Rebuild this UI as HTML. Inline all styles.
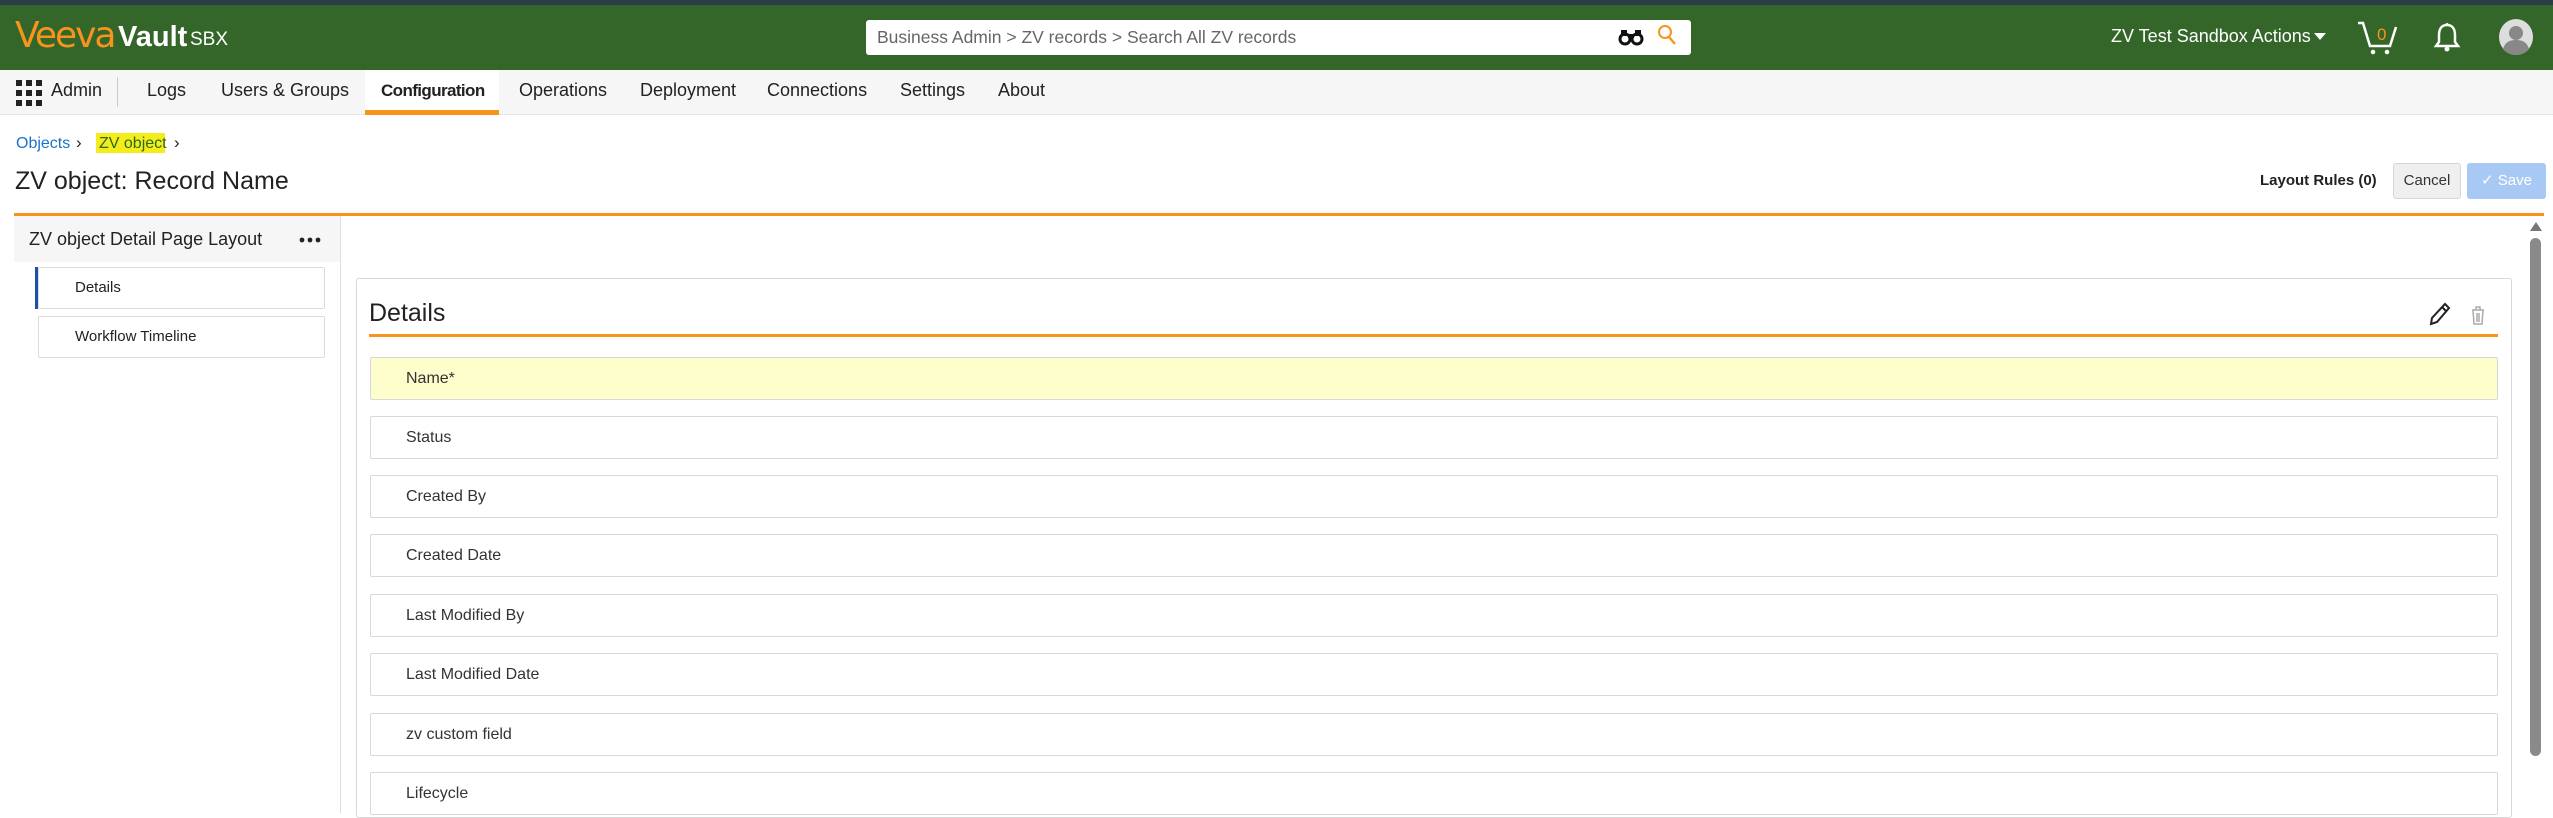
<!DOCTYPE html>
<html><head><meta charset="utf-8"><style>
*{margin:0;padding:0;box-sizing:border-box}
body{width:2553px;height:813px;overflow:hidden;background:#fff;font-family:"Liberation Sans",Arial,sans-serif;color:#222;position:relative}
.a{position:absolute}
.row{position:absolute;left:370px;width:2128px;height:43px;border:1px solid #d8d8d8;border-radius:2px;font-size:16px;line-height:41px;padding-left:35px;color:#333}
.nav{position:absolute;top:80px;font-size:18px;color:#222}
</style></head><body>
<div class="a" style="left:0;top:0;width:2553px;height:5px;background:#2b3d45"></div>
<div class="a" style="left:0;top:5px;width:2553px;height:65px;background:#336628"></div>
<div class="a" style="left:15px;top:18px;font-size:36px;color:#f7941d;font-family:'DejaVu Sans',sans-serif;letter-spacing:-2px;line-height:36px">Veeva</div>
<div class="a" style="left:118px;top:20px;font-size:29px;font-weight:bold;color:#fff;line-height:34px">Vault</div>
<div class="a" style="left:190px;top:28px;font-size:19px;color:#fff;line-height:24px">SBX</div>
<div class="a" style="left:866px;top:20px;width:825px;height:35px;background:#fff;border-radius:3px"></div>
<div class="a" style="left:877px;top:26px;font-size:17.5px;color:#666;line-height:22px">Business Admin &gt; ZV records &gt; Search All ZV records</div>
<svg class="a" style="left:1618px;top:28px" width="26" height="18" viewBox="0 0 26 18"><circle cx="7" cy="11" r="5" fill="none" stroke="#111" stroke-width="3"/><circle cx="19" cy="11" r="5" fill="none" stroke="#111" stroke-width="3"/><rect x="3" y="2" width="6" height="6" fill="#111"/><rect x="17" y="2" width="6" height="6" fill="#111"/><rect x="10" y="6" width="6" height="4" fill="#111"/></svg>
<svg class="a" style="left:1657px;top:24px" width="20" height="22" viewBox="0 0 20 22"><circle cx="8" cy="8" r="6" fill="none" stroke="#f7941d" stroke-width="2"/><line x1="12" y1="13" x2="18" y2="20" stroke="#f7941d" stroke-width="2.4"/></svg>
<div class="a" style="left:2111px;top:25px;font-size:18px;color:#fff;line-height:22px">ZV Test Sandbox Actions</div>
<div class="a" style="left:2314px;top:33px;width:0;height:0;border-left:6px solid transparent;border-right:6px solid transparent;border-top:7px solid #fff"></div>
<svg class="a" style="left:2357px;top:20px" width="42" height="36" viewBox="0 0 42 36"><path d="M1 3h5l7 23h20l6-19" fill="none" stroke="#fff" stroke-width="2.5"/><circle cx="16" cy="32" r="2.3" fill="#fff"/><circle cx="30" cy="32" r="2.3" fill="#fff"/><text x="20" y="20" font-size="17" font-family="Liberation Sans" fill="#f7941d">0</text></svg>
<svg class="a" style="left:2433px;top:22px" width="28" height="32" viewBox="0 0 28 32"><path d="M14 3c-6 0-8 5-8 10v7l-3 4h22l-3-4v-7c0-5-2-10-8-10z" fill="none" stroke="#fff" stroke-width="2.5"/><circle cx="14" cy="27" r="2.5" fill="#fff"/><circle cx="14" cy="2.5" r="1.5" fill="#fff"/></svg>
<svg class="a" style="left:2499px;top:19px" width="34" height="36" viewBox="0 0 34 36"><ellipse cx="17" cy="18" rx="17" ry="18" fill="#ddd"/><circle cx="17" cy="14" r="7" fill="#888"/><path d="M4 30c2-7 7-9 13-9s11 2 13 9c-3 4-8 6-13 6s-10-2-13-6z" fill="#888"/></svg>

<div class="a" style="left:0;top:70px;width:2553px;height:45px;background:#f6f6f6;border-bottom:1px solid #e4e4e4"></div>
<svg class="a" style="left:16px;top:80px" width="26" height="26" viewBox="0 0 26 26" fill="#222"><rect x="0" y="0" width="6" height="6"/><rect x="10" y="0" width="6" height="6"/><rect x="20" y="0" width="6" height="6"/><rect x="0" y="10" width="6" height="6"/><rect x="10" y="10" width="6" height="6"/><rect x="20" y="10" width="6" height="6"/><rect x="0" y="20" width="6" height="6"/><rect x="10" y="20" width="6" height="6"/><rect x="20" y="20" width="6" height="6"/></svg>
<div class="nav" style="left:51px">Admin</div>
<div class="a" style="left:117px;top:77px;width:1px;height:30px;background:#ccc"></div>
<div class="nav" style="left:147px">Logs</div>
<div class="nav" style="left:221px">Users &amp; Groups</div>
<div class="a" style="left:365px;top:70px;width:134px;height:45px;background:#fff;border-bottom:5px solid #f7941d"></div>
<div class="nav" style="left:381px;font-weight:bold;font-size:17px;letter-spacing:-0.6px;top:81px">Configuration</div>
<div class="nav" style="left:519px">Operations</div>
<div class="nav" style="left:640px">Deployment</div>
<div class="nav" style="left:767px">Connections</div>
<div class="nav" style="left:900px">Settings</div>
<div class="nav" style="left:998px">About</div>

<div class="a" style="left:16px;top:134px;font-size:16px;color:#1a73c9;line-height:20px">Objects</div>
<div class="a" style="left:76px;top:133px;font-size:17px;line-height:20px">›</div>
<div class="a" style="left:96px;top:133px;width:69px;height:20px;background:#f5ec1c"></div>
<div class="a" style="left:99px;top:134px;font-size:16px;color:#2b6a1c;line-height:20px">ZV object</div>
<div class="a" style="left:174px;top:133px;font-size:17px;line-height:20px">›</div>
<div class="a" style="left:15px;top:165px;font-size:25px;line-height:32px;color:#222">ZV object: Record Name</div>
<div class="a" style="left:2260px;top:171px;font-size:15px;font-weight:bold;line-height:20px">Layout Rules (0)</div>
<div class="a" style="left:2393px;top:163px;width:68px;height:36px;background:#efefef;border:1px solid #d5d5d5;border-radius:3px;font-size:15px;line-height:34px;text-align:center;color:#333">Cancel</div>
<div class="a" style="left:2467px;top:163px;width:79px;height:36px;background:#a9c9f5;border-radius:3px;font-size:15px;line-height:36px;text-align:center;color:#fff">✓ Save</div>
<div class="a" style="left:14px;top:213px;width:2530px;height:3px;background:#f7941d"></div>

<div class="a" style="left:14px;top:216px;width:326px;height:46px;background:#f6f6f6"></div>
<div class="a" style="left:29px;top:228px;font-size:18px;line-height:22px;color:#222">ZV object Detail Page Layout</div>
<svg class="a" style="left:299px;top:237px" width="22" height="6" viewBox="0 0 22 6" fill="#222"><circle cx="3" cy="3" r="2.4"/><circle cx="11" cy="3" r="2.4"/><circle cx="19" cy="3" r="2.4"/></svg>
<div class="a" style="left:340px;top:216px;width:1px;height:597px;background:#ddd"></div>
<div class="a" style="left:35px;top:267px;width:3px;height:42px;background:#1f4fa6"></div>
<div class="a" style="left:38px;top:267px;width:287px;height:42px;border:1px solid #dcdcdc;border-radius:2px;font-size:15px;line-height:40px;padding-left:36px">Details</div>
<div class="a" style="left:38px;top:316px;width:287px;height:42px;border:1px solid #dcdcdc;border-radius:2px;font-size:15px;line-height:40px;padding-left:36px">Workflow Timeline</div>

<div class="a" style="left:356px;top:278px;width:2156px;height:540px;border:1px solid #d8d8d8;border-radius:3px"></div>
<div class="a" style="left:369px;top:297px;font-size:25px;line-height:32px">Details</div>
<svg class="a" style="left:2429px;top:302px" width="22" height="24" viewBox="0 0 22 24"><path d="M16 2l4 4L8 20l-6 2 1-6z" fill="none" stroke="#222" stroke-width="2"/><line x1="13" y1="5" x2="17" y2="9" stroke="#222" stroke-width="2"/></svg>
<svg class="a" style="left:2470px;top:305px" width="16" height="20" viewBox="0 0 16 20"><path d="M2 5h12M6 5V2h4v3M3 5l1 14h8l1-14M7 8v9M9 8v9" fill="none" stroke="#aaa" stroke-width="1.5"/></svg>
<div class="a" style="left:369px;top:334px;width:2129px;height:3px;background:#f7941d"></div>

<div class="row" style="top:357px;background:#fefdcc">Name*</div>
<div class="row" style="top:416px">Status</div>
<div class="row" style="top:475px">Created By</div>
<div class="row" style="top:534px">Created Date</div>
<div class="row" style="top:594px">Last Modified By</div>
<div class="row" style="top:653px">Last Modified Date</div>
<div class="row" style="top:713px">zv custom field</div>
<div class="row" style="top:772px">Lifecycle</div>

<div class="a" style="left:2530px;top:222px;width:0;height:0;border-left:6px solid transparent;border-right:6px solid transparent;border-bottom:9px solid #777"></div>
<div class="a" style="left:2530px;top:238px;width:11px;height:518px;background:#8a8a8a;border-radius:6px"></div>
</body></html>
